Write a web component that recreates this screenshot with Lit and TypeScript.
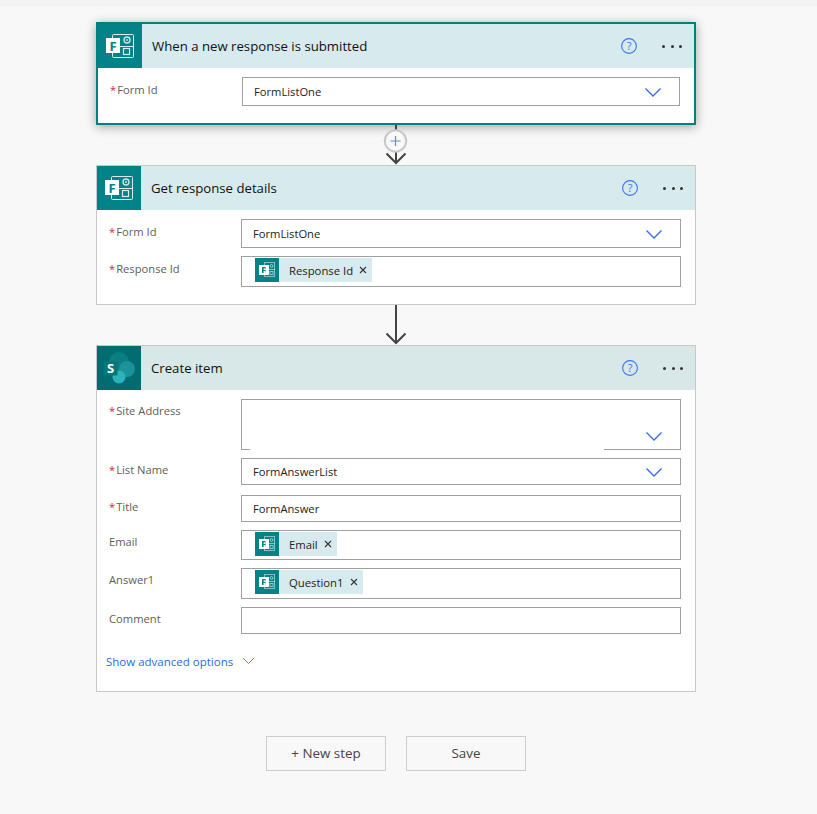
import {LitElement, css, html, svg, nothing} from 'lit';
import {customElement} from 'lit/decorators.js';

const formsIcon = html`<svg class="brand-svg" width="44" height="44" viewBox="0 0 44 44">
  <rect x="14.5" y="10.5" width="21" height="23" rx="1" fill="none" stroke="#fff" opacity=".85"/>
  <path d="M22 22.5H35.5" stroke="#fff" opacity=".85"/>
  <circle cx="29" cy="16" r="3" fill="none" stroke="#fff" stroke-width="1.4" opacity=".8"/>
  <circle cx="29" cy="16" r="1" fill="#fff" opacity=".8"/>
  <rect x="25.5" y="24.5" width="6" height="6" fill="none" stroke="#fff" stroke-width="1.2" opacity=".85"/>
  <rect x="8" y="14" width="14" height="15" fill="#fff"/>
  <text x="15" y="26.5" text-anchor="middle" class="brand-letter" fill="#038387">F</text>
</svg>`;

const sharepointIcon = html`<svg class="brand-svg" width="44" height="44" viewBox="0 0 44 44">
  <circle cx="22" cy="16" r="10" fill="#0a7f83"/>
  <circle cx="30" cy="23" r="8" fill="#1a9399"/>
  <circle cx="22" cy="31" r="6.5" fill="#2cb4bd"/>
  <rect x="6.5" y="15.5" width="14" height="14" rx="1" fill="#04777b"/>
  <text x="13.5" y="27" text-anchor="middle" class="brand-letter" fill="#fff">S</text>
</svg>`;

const tokenIcon = html`<svg width="24" height="24" viewBox="0 0 24 24">
  <rect x="9.5" y="4.5" width="10" height="14" fill="none" stroke="#fff" opacity=".5"/>
  <path d="M13 11.5H19.5" stroke="#fff" opacity=".5"/>
  <circle cx="16.5" cy="8" r="1.4" fill="none" stroke="#fff" opacity=".55"/>
  <rect x="15" y="13.5" width="3" height="3" fill="none" stroke="#fff" opacity=".55"/>
  <rect x="4" y="7" width="10" height="10" fill="#fff"/>
  <rect x="7" y="9" width="3.6" height="6" fill="#038387"/>
  <rect x="8.6" y="10.3" width="2" height="1.6" fill="#fff"/>
  <rect x="8.6" y="13" width="2" height="2" fill="#fff"/>
</svg>`;

const chevron = html`<svg class="chevron" width="18" height="10" viewBox="0 0 18 10">
  <path d="M1.5 1.5L9 9L16.5 1.5" fill="none" stroke="#3568f0" stroke-width="1.3"/>
</svg>`;

const stem = svg`<path d="M20 0V38" stroke="#444" stroke-width="2"/>`;
const head = svg`<path d="M10.5 28.5L20 38L29.5 28.5" fill="none" stroke="#444" stroke-width="2"/>`;

type Field = {
  label: string;
  required?: boolean;
  value?: string;
  token?: string;
  dropdown?: boolean;
  size: string;
};

type Card = {
  title: string;
  icon: unknown;
  kind: string;
  fields: Field[];
};

const cards: Card[] = [
  {
    title: 'When a new response is submitted',
    icon: formsIcon,
    kind: 'active',
    fields: [{label: 'Form Id', required: true, value: 'FormListOne', dropdown: true, size: 'h29'}],
  },
  {
    title: 'Get response details',
    icon: formsIcon,
    kind: 'plain',
    fields: [
      {label: 'Form Id', required: true, value: 'FormListOne', dropdown: true, size: 'h29'},
      {label: 'Response Id', required: true, token: 'Response Id', size: 'h31'},
    ],
  },
  {
    title: 'Create item',
    icon: sharepointIcon,
    kind: 'sharepoint',
    fields: [
      {label: 'Site Address', required: true, dropdown: true, size: 'site'},
      {label: 'List Name', required: true, value: 'FormAnswerList', dropdown: true, size: 'h27'},
      {label: 'Title', required: true, value: 'FormAnswer', size: 'h27 spaced'},
      {label: 'Email', token: 'Email', size: 'h30'},
      {label: 'Answer1', token: 'Question1', size: 'h31'},
      {label: 'Comment', size: 'h27'},
    ],
  },
];

@customElement('app-root')
export class AppRoot extends LitElement {
  renderField(f: Field) {
    return html`
      <div class="label ${f.size.includes('spaced') ? 'spaced' : ''}">
        ${f.required ? html`<span class="star">*</span>` : nothing}${f.label}
      </div>
      <div class="box ${f.size}">
        ${f.value ? html`<span class="value">${f.value}</span>` : nothing}
        ${f.token
          ? html`<span class="token">
              <span class="token-icon">${tokenIcon}</span>
              <span class="token-text">${f.token}</span>
              <svg class="token-x" width="8" height="8" viewBox="0 0 8 8">
                <path d="M1 1L7 7M7 1L1 7" stroke="#333" stroke-width="1.1"/>
              </svg>
            </span>`
          : nothing}
        ${f.dropdown ? chevron : nothing}
      </div>
    `;
  }

  renderCard(c: Card) {
    return html`
      <section class="card ${c.kind}">
        <header class="head">
          <div class="brand">${c.icon}</div>
          <div class="title">${c.title}</div>
          <svg class="help" width="18" height="18" viewBox="0 0 18 18">
            <circle cx="9" cy="9" r="7.4" fill="none" stroke="#3b74f5" stroke-width="1.1"/>
            <text x="9" y="13" text-anchor="middle" class="help-mark" fill="#3b74f5">?</text>
          </svg>
          <div class="dots"><i></i><i></i><i></i></div>
        </header>
        <div class="body">
          <div class="fields">${c.fields.map((f) => this.renderField(f))}</div>
          ${c.kind === 'sharepoint'
            ? html`<div class="advanced">
                <span>Show advanced options</span>
                <svg width="13" height="8" viewBox="0 0 13 8">
                  <path d="M1 1L6.5 6.5L12 1" fill="none" stroke="#5f86f5" stroke-width="1"/>
                </svg>
              </div>`
            : nothing}
        </div>
      </section>
    `;
  }

  render() {
    return html`
      <div class="strip"></div>
      <main class="canvas">
        ${this.renderCard(cards[0])}
        <svg class="link" width="40" height="40" viewBox="0 0 40 40">
          ${stem}
          <circle cx="19.5" cy="16" r="10.7" fill="#f8f8f8" stroke="#c8c8c8" stroke-width="2"/>
          <path d="M19.5 11V21M14.5 16H24.5" stroke="#5a8fdc" stroke-width="1.2"/>
          ${head}
        </svg>
        ${this.renderCard(cards[1])}
        <svg class="link" width="40" height="40" viewBox="0 0 40 40">${stem}${head}</svg>
        ${this.renderCard(cards[2])}
        <div class="actions">
          <button>+ New step</button>
          <button>Save</button>
        </div>
      </main>
    `;
  }

  static styles = css`
    :host {
      display: block;
      min-height: 814px;
      background: #f8f8f8;
      font-family: 'Open Sans', 'Noto Sans', sans-serif;
      color: #323130;
    }

    .strip {
      height: 6px;
      background: #f3f3f3;
    }

    .canvas {
      width: 600px;
      margin-left: 96px;
      padding-top: 16px;
      display: flex;
      flex-direction: column;
      align-items: center;
    }

    .link {
      display: block;
      flex: none;
    }

    .card {
      width: 100%;
      box-sizing: border-box;
      background: #fff;
      border: 1px solid #c8c8c8;
    }
    .card.active {
      border: 2px solid #008080;
      box-shadow: 0 2px 10px rgba(0, 0, 0, 0.35);
    }

    .head {
      display: flex;
      align-items: center;
      height: 44px;
      background: #d7eaed;
      padding-right: 12px;
    }
    .sharepoint .head {
      background: #d8e8e8;
    }

    .brand {
      width: 44px;
      height: 44px;
      flex: none;
      background: #038387;
    }
    .sharepoint .brand {
      background: #036c70;
    }
    .brand-svg {
      display: block;
    }
    .brand-letter {
      font: 700 13px 'Open Sans', sans-serif;
    }

    .title {
      flex: 1;
      margin-left: 10px;
      font-size: 13.2px;
      color: #111;
    }

    .help {
      flex: none;
      margin-right: 24px;
    }
    .help-mark {
      font: 11px 'Open Sans', sans-serif;
    }

    .dots {
      display: flex;
      gap: 5.5px;
    }
    .dots i {
      width: 3px;
      height: 3px;
      border-radius: 50%;
      background: #333;
    }

    .body {
      padding: 9px 14px 17px 12px;
    }
    .sharepoint .body {
      padding-bottom: 0;
    }

    .fields {
      display: grid;
      grid-template-columns: 132px 1fr;
      row-gap: 8px;
    }

    .label {
      font-size: 11.2px;
      line-height: 16px;
      padding-top: 5px;
      color: #605e5c;
    }
    .sharepoint .label {
      padding-top: 4px;
    }
    .label.spaced {
      margin-top: 2px;
    }
    .star {
      color: #d9233f;
      margin-right: 1px;
    }

    .box {
      position: relative;
      box-sizing: border-box;
      border: 1px solid #a0a0a0;
      background: #fff;
      display: flex;
      align-items: center;
      padding-left: 11px;
    }
    .h27 {
      height: 27px;
    }
    .h29 {
      height: 29px;
    }
    .h30 {
      height: 30px;
    }
    .h31 {
      height: 31px;
    }
    .box.spaced {
      margin-top: 2px;
    }
    .site {
      height: 51px;
    }
    /* the gap in the bottom edge of the site address box */
    .site::after {
      content: '';
      position: absolute;
      left: 8px;
      right: 76px;
      bottom: -1px;
      height: 1px;
      background: #fff;
    }

    .value {
      font-size: 11.2px;
      color: #222;
    }

    .chevron {
      position: absolute;
      right: 17.5px;
      bottom: 8px;
    }
    .h27 .chevron {
      bottom: 7px;
    }

    .token {
      align-self: flex-start;
      margin-left: 2px;
      margin-top: 1px;
      height: 24px;
      display: flex;
      align-items: center;
      background: #d7eaed;
      padding-right: 5px;
    }
    .token-icon {
      width: 24px;
      height: 24px;
      background: #038387;
      margin-right: 10px;
    }
    .token-icon svg {
      display: block;
    }
    .token-text {
      font-size: 11.3px;
      color: #222;
    }
    .token-x {
      margin-left: 6px;
    }

    .advanced {
      display: flex;
      align-items: center;
      gap: 9px;
      height: 57px;
      margin-left: -3px;
      padding-bottom: 3px;
      box-sizing: border-box;
      font-size: 11.5px;
      color: #2b6be4;
    }

    .actions {
      display: flex;
      gap: 20px;
      margin-top: 44px;
    }
    button {
      width: 120px;
      height: 35px;
      background: transparent;
      border: 1px solid #cdcdcd;
      font: 13.4px 'Open Sans', sans-serif;
      color: #444;
      padding: 0 0 2px;
    }
  `;
}
